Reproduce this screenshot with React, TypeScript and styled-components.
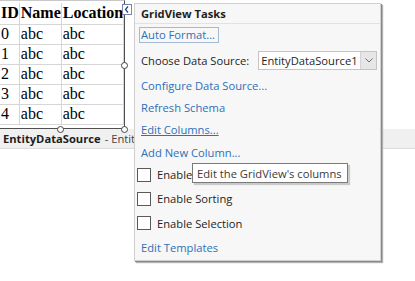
import React from "react";
import styled, { createGlobalStyle } from "styled-components";

const Global = createGlobalStyle`
  html, body { margin: 0; padding: 0; background: #fff; }
  #root { width: 415px; height: 281px; }
`;

const UI_FONT = `"Open Sans", "Noto Sans", sans-serif`;

const Root = styled.div`
  position: relative;
  width: 415px;
  height: 281px;
  overflow: hidden;
  background: #ffffff;
`;

const Surface = styled.div`
  display: flex;
  flex-direction: column;
  width: 415px;
`;

const Frame = styled.div`
  position: relative;
  width: 125px;
  height: 129px;
  box-sizing: border-box;
  border: 1px solid #505050;
  border-left: none;
  border-top-color: #c8c8c8;
  padding-top: 2px;
`;

const Handle = styled.span<{ $x: number; $y: number }>`
  position: absolute;
  left: ${(p) => p.$x - 3}px;
  top: ${(p) => p.$y - 3}px;
  width: 5px;
  height: 5px;
  border: 1px solid #444;
  border-radius: 50%;
  background: #fff;
`;

const Table = styled.table`
  border-collapse: collapse;
  font-family: "Liberation Serif", "Times New Roman", serif;
  font-size: 16px;
  color: #000;
  table-layout: fixed;
`;

const Cell = styled.td<{ $w: number; $head?: boolean }>`
  width: ${(p) => p.$w}px;
  height: ${(p) => (p.$head ? 21 : 20)}px;
  padding: 0 0 0 1px;
  border: 1px solid #d6d6d6;
  border-top: ${(p) => (p.$head ? "none" : "1px solid #d6d6d6")};
  border-left: none;
  font-weight: ${(p) => (p.$head ? 700 : 400)};
  white-space: nowrap;
  overflow: hidden;
  line-height: 18px;
  vertical-align: middle;
  box-sizing: border-box;
`;

const Caption = styled.div`
  height: 19px;
  background: #f0f0f0;
  border-bottom: 1px solid #dcdcdc;
  display: flex;
  align-items: center;
  padding-left: 3px;
  font-family: ${UI_FONT};
  font-size: 11.2px;
  color: #1e1e1e;
  white-space: nowrap;
`;

const CapBold = styled.span`
  font-weight: 700;
  margin-right: 4px;
`;

const CapRest = styled.span`
  color: #444;
`;

const Collapse = styled.div`
  position: absolute;
  left: 122px;
  top: 4px;
  width: 10px;
  height: 11px;
  box-sizing: border-box;
  border: 1px solid #7386ad;
  background: #fff;
  display: flex;
  align-items: center;
  justify-content: center;
`;

const Panel = styled.div`
  position: absolute;
  left: 134px;
  top: 3px;
  width: 247px;
  height: 258px;
  box-sizing: border-box;
  background: #f7f7f7;
  border: 1px solid #d0d0d0;
  box-shadow: 1px 1px 0 #8a8a8a, 2px 2px 1px #b0b0b0;
  font-family: ${UI_FONT};
  font-size: 11.2px;
  color: #1e1e1e;
  display: flex;
  flex-direction: column;
`;

const Header = styled.div`
  height: 20px;
  border-bottom: 1px solid #e2e2e2;
  display: flex;
  align-items: center;
  padding-left: 6px;
  font-weight: 700;
  color: #1e1e1e;
`;

const Row = styled.div<{ $h: number; $pad?: number }>`
  height: ${(p) => p.$h}px;
  display: flex;
  align-items: center;
  padding-left: ${(p) => p.$pad ?? 6}px;
  white-space: nowrap;
  flex-shrink: 0;
`;

const Link = styled.span<{ $u?: boolean }>`
  color: #2e70b8;
  text-decoration: ${(p) => (p.$u ? "underline" : "none")};
`;

const FocusLink = styled.span`
  color: #2e70b8;
  border: 1px solid #a5b8d2;
  padding: 0 3px 0 1px;
  margin-left: -2px;
  height: 14px;
  line-height: 14px;
  display: flex;
  align-items: center;
`;

const Label = styled.span`
  color: #1e1e1e;
`;

const Select = styled.div`
  margin-left: 9px;
  width: 119px;
  height: 19px;
  box-sizing: border-box;
  border: 1px solid #c4c4c4;
  background: #fff;
  display: flex;
  align-items: stretch;
`;

const SelectText = styled.span`
  flex: 1;
  padding-left: 2px;
  display: flex;
  align-items: center;
  overflow: hidden;
`;

const SelectArrow = styled.span`
  width: 15px;
  background: #e6e6e6;
  border-left: 1px solid #d2d2d2;
  display: flex;
  align-items: center;
  justify-content: center;
`;

const Box = styled.span`
  width: 12px;
  height: 12px;
  border: 1px solid #5a5a5a;
  background: #fff;
  margin-right: 6px;
  flex-shrink: 0;
`;

const Tooltip = styled.div`
  position: absolute;
  left: 192px;
  top: 163px;
  width: 156px;
  height: 20px;
  box-sizing: border-box;
  background: #fff;
  border: 1px solid #7a7a7a;
  box-shadow: 2px 2px 1px rgba(0, 0, 0, 0.18);
  font-family: ${UI_FONT};
  font-size: 11.2px;
  color: #3a3a3a;
  display: flex;
  align-items: center;
  padding-left: 4px;
  white-space: nowrap;
`;

const rows = [0, 1, 2, 3, 4];

export default function App() {
  return (
    <Root>
      <Global />
      <Surface>
        <Frame>
          <Table>
            <tbody>
              <tr>
                <Cell $w={18} $head>ID</Cell>
                <Cell $w={41} $head>Name</Cell>
                <Cell $w={62} $head>Location</Cell>
              </tr>
              {rows.map((r) => (
                <tr key={r}>
                  <Cell $w={18}>{r}</Cell>
                  <Cell $w={41}>abc</Cell>
                  <Cell $w={62}>abc</Cell>
                </tr>
              ))}
            </tbody>
          </Table>
          <Handle $x={124} $y={64} />
          <Handle $x={60} $y={128} />
          <Handle $x={124} $y={128} />
        </Frame>
        <Caption>
          <CapBold>EntityDataSource</CapBold>
          <CapRest>- EntityDataSource1</CapRest>
        </Caption>
      </Surface>
      <Collapse>
        <svg width="6" height="7" viewBox="0 0 6 7">
          <path d="M4 0.5 L1.5 3.5 L4 6.5" fill="none" stroke="#2c3e70" strokeWidth="1.2" />
        </svg>
      </Collapse>
      <Panel>
        <Header>GridView Tasks</Header>
        <Row $h={22}>
          <FocusLink>Auto Format...</FocusLink>
        </Row>
        <Row $h={29}>
          <Label>Choose Data Source:</Label>
          <Select>
            <SelectText>EntityDataSource1</SelectText>
            <SelectArrow>
              <svg width="8" height="5" viewBox="0 0 8 5">
                <path d="M0.5 0.5 L4 4 L7.5 0.5" fill="none" stroke="#707070" strokeWidth="1" />
              </svg>
            </SelectArrow>
          </Select>
        </Row>
        <Row $h={21}>
          <Link>Configure Data Source...</Link>
        </Row>
        <Row $h={22}>
          <Link>Refresh Schema</Link>
        </Row>
        <Row $h={23}>
          <Link $u>Edit Columns...</Link>
        </Row>
        <Row $h={22}>
          <Link>Add New Column...</Link>
        </Row>
        <Row $h={23} $pad={2}>
          <Box />
          <Label>Enable Paging</Label>
        </Row>
        <Row $h={25} $pad={2}>
          <Box />
          <Label>Enable Sorting</Label>
        </Row>
        <Row $h={24} $pad={2}>
          <Box />
          <Label>Enable Selection</Label>
        </Row>
        <Row $h={25}>
          <Link>Edit Templates</Link>
        </Row>
      </Panel>
      <Tooltip>Edit the GridView's columns</Tooltip>
    </Root>
  );
}
